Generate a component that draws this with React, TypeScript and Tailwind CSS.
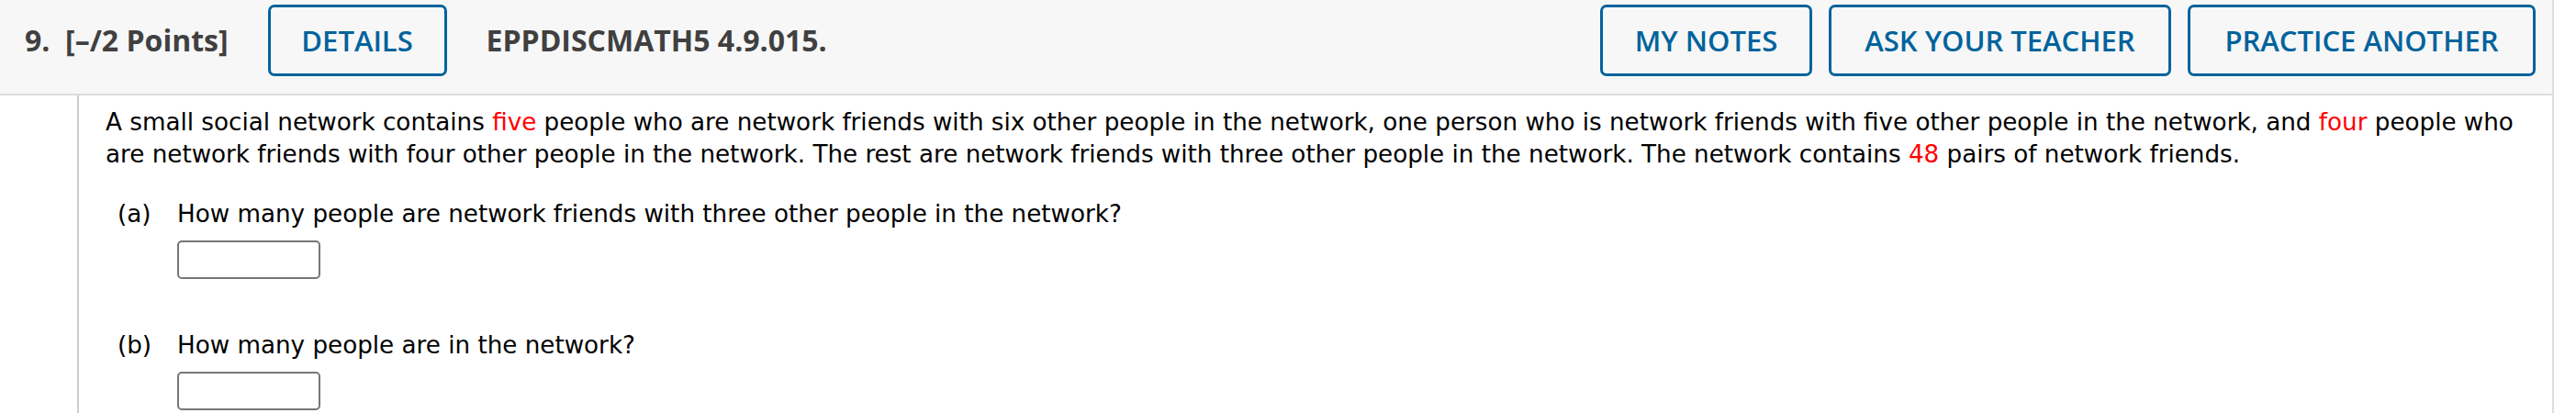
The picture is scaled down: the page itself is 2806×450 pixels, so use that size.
import React from "react";

function HeaderButton({ label, width }: { label: string; width: string }) {
  return (
    <button
      className={`${width} h-[78px] border-[3px] border-[#00639c] rounded-[7px] text-[#00639c] text-[31px] font-semibold uppercase leading-none flex items-center justify-center bg-[#f7f7f7] whitespace-nowrap`}
    >
      {label}
    </button>
  );
}

function AnswerBox() {
  return <input type="text" className="mt-[11px] w-[156px] h-[42px] border-2 border-[#767676] rounded-[5px] bg-white outline-none" />;
}

function Part({ letter, question }: { letter: string; question: string }) {
  return (
    <div className="ml-[13px]">
      <div className="flex">
        <span className="w-[65px] shrink-0">({letter})</span>
        <span>{question}</span>
      </div>
      <div className="pl-[65px]">
        <AnswerBox />
      </div>
    </div>
  );
}

export default function App() {
  const red = "text-[#ff0000]";
  return (
    <div className="w-[2806px] h-[450px] bg-white overflow-hidden">
      <div className="w-[2782px] h-[450px] border-r-2 border-[#dddddd] flex flex-col">
        {/* question header */}
        <div className="flex items-center bg-[#f7f7f7] border-b-2 border-[#dddddd] pt-[5px] pb-[19px] pl-[27px] pr-[18px] font-['Open_Sans',sans-serif] text-[#404040]">
          <div className="flex items-center gap-[43px]">
            <span className="text-[32px] font-bold whitespace-pre">9.{"  "}[–/2 Points]</span>
            <HeaderButton label="Details" width="w-[195px]" />
            <span className="text-[32px] font-bold">EPPDISCMATH5 4.9.015.</span>
          </div>
          <div className="ml-auto flex items-center gap-[18px]">
            <HeaderButton label="My Notes" width="w-[231px]" />
            <HeaderButton label="Ask Your Teacher" width="w-[373px]" />
            <HeaderButton label="Practice Another" width="w-[379px]" />
          </div>
        </div>

        {/* question body */}
        <div className="ml-[84px] flex-1 border-l-2 border-[#cccccc] pl-[29px] pr-[20px] pt-[12px] font-['DejaVu_Sans',Verdana,sans-serif] text-[26.2px] leading-[35px] text-black">
          <p>
            A small social network contains <span className={red}>five</span> people who are network friends with six other
            people in the network, one person who is network friends with five other people in the network, and{" "}
            <span className={red}>four</span> people who are network friends with four other people in the network. The rest
            are network friends with three other people in the network. The network contains <span className={red}>48</span>{" "}
            pairs of network friends.
          </p>
          <div className="mt-[30px] flex flex-col gap-[55px]">
            <Part letter="a" question="How many people are network friends with three other people in the network?" />
            <Part letter="b" question="How many people are in the network?" />
          </div>
        </div>
      </div>
    </div>
  );
}
